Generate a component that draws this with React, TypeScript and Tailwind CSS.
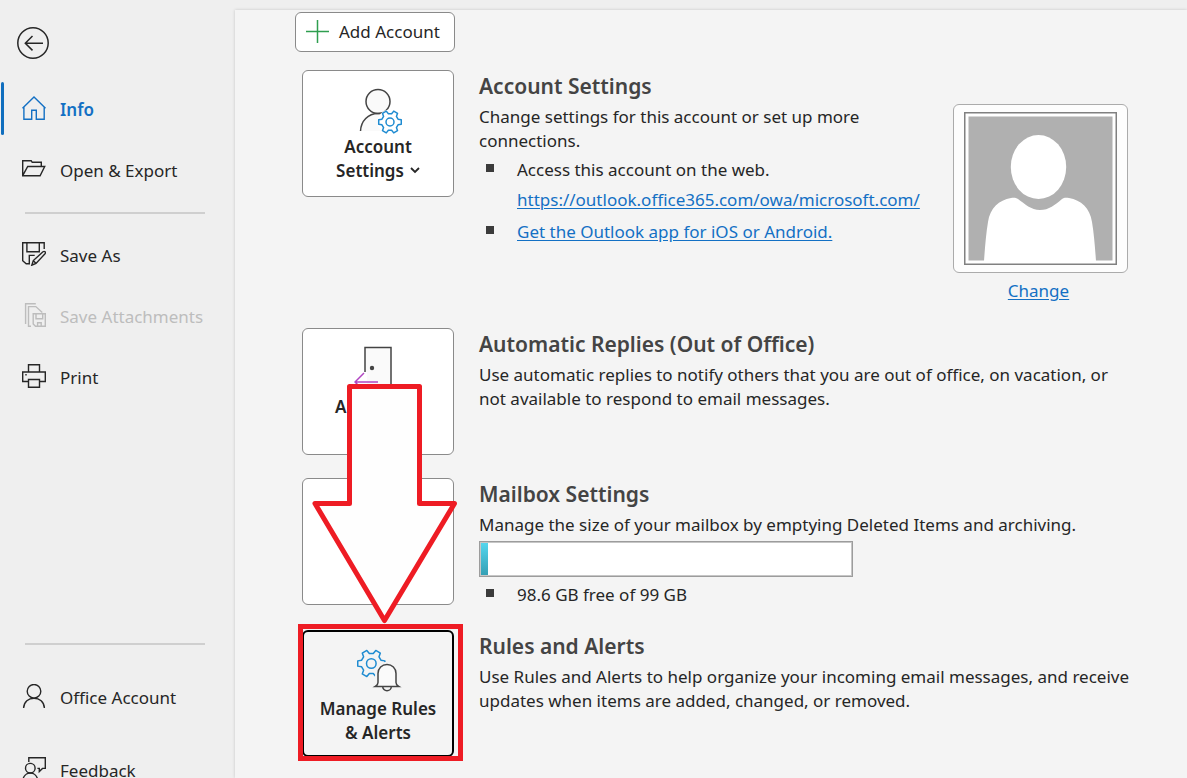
import React from "react";

type IconProps = { children: React.ReactNode };

function NavIcon({ children }: IconProps) {
    return (
        <svg
            viewBox="0 0 24 24"
            className="h-6 w-6 shrink-0"
            fill="none"
            stroke="currentColor"
            strokeWidth="1.4"
            aria-hidden="true"
        >
            {children}
        </svg>
    );
}

function TileIcon({ children }: IconProps) {
    return (
        <svg viewBox="0 0 48 47" className="h-[47px] w-12" fill="none" strokeWidth="1.5" aria-hidden="true">
            {children}
        </svg>
    );
}

// six-toothed cog outline around (cx, cy)
function gearPath(cx: number, cy: number, r: number) {
    const steps: [number, number][] = [];
    for (let k = 0; k < 6; k++) {
        const a = k * 60;
        steps.push([a - 11, r], [a + 11, r], [a + 19, r * 0.74], [a + 41, r * 0.74]);
    }
    const points = steps.map(([deg, rad]) => {
        const t = (deg * Math.PI) / 180;
        return `${(cx + rad * Math.cos(t)).toFixed(2)} ${(cy + rad * Math.sin(t)).toFixed(2)}`;
    });
    return `M${points.join("L")}Z`;
}

type NavItemProps = {
    label: string;
    icon: React.ReactNode;
    active?: boolean;
    disabled?: boolean;
};

function NavItem({ label, icon, active, disabled }: NavItemProps) {
    const color = active ? "text-[#1370c4] font-semibold" : disabled ? "text-[#bdbdbd]" : "text-[#262626]";
    return (
        <button
            type="button"
            disabled={disabled}
            className={`flex h-[60px] w-full items-center text-left ${color}`}
        >
            <span className={`ml-px h-[53px] w-[3px] rounded-sm ${active ? "bg-[#106ebe]" : ""}`} />
            <span className="ml-[18px] flex items-center gap-[14px]">
                <NavIcon>{icon}</NavIcon>
                <span className="pt-1">{label}</span>
            </span>
        </button>
    );
}

type TileProps = {
    icon?: React.ReactNode;
    children?: React.ReactNode;
    labelledBy?: string;
    selected?: boolean;
    compact?: boolean;
};

function Tile({ icon, children, labelledBy, selected, compact }: TileProps) {
    return (
        <button
            type="button"
            aria-labelledby={labelledBy}
            className={`flex h-[127px] w-[152px] shrink-0 flex-col items-center rounded-md font-semibold text-[#262626] ${
                compact ? "" : "gap-[2px]"
            } ${selected ? "border-2 border-black bg-[#f4f4f4] pt-4" : "border border-[#8a8a8a] bg-white pt-[17px]"}`}
        >
            {icon && <TileIcon>{icon}</TileIcon>}
            <span>{children}</span>
        </button>
    );
}

type SectionProps = {
    id: string;
    title: string;
    tile: React.ReactNode;
    children: React.ReactNode;
    aside?: React.ReactNode;
};

function Section({ id, title, tile, children, aside }: SectionProps) {
    return (
        <section className="flex items-start">
            {tile}
            <div className="ml-[25px] min-w-0 flex-1">
                <h2 id={id} className="text-[21px] leading-8 font-semibold text-[#444444]">
                    {title}
                </h2>
                <div className="mt-[3px]">{children}</div>
            </div>
            {aside}
        </section>
    );
}

function Bullet({ children }: { children: React.ReactNode }) {
    return (
        <li className="flex">
            <span className="mt-[6px] ml-[7px] h-2 w-2 shrink-0 bg-[#3b3b3b]" />
            <div className="ml-[23px]">{children}</div>
        </li>
    );
}

function Sidebar() {
    return (
        <nav className="w-[235px] shrink-0 pt-[27px]">
            <button type="button" aria-label="Back" className="ml-[17px] block h-8 w-8">
                <svg viewBox="0 0 32 32" className="h-8 w-8" fill="none" stroke="#262626" strokeWidth="1.5">
                    <circle cx="16" cy="16" r="15.2" />
                    <path d="M26 16.2H8.5M15.5 9l-7.2 7.2 7.2 7.2" />
                </svg>
            </button>
            <div className="mt-[19px] flex flex-col gap-px">
                <NavItem
                    label="Info"
                    active
                    icon={<path d="M.5 12.2 12 1l11.5 11.2M1.9 11v12.2h7.8v-8.9h4.6v8.9h7.9V11" />}
                />
                <NavItem
                    label="Open & Export"
                    icon={<path d="M.7 18.7V3.7h8.5l1 1.6h9.1v4.2M.7 18.7l5-9.2h17l-4.6 9.2z" />}
                />
            </div>
            <hr className="mt-[13px] mr-[30px] ml-[25px] border-t-2 border-[#cfcfcf]" />
            <div className="mt-[10px] flex flex-col gap-px">
                <NavItem
                    label="Save As"
                    icon={
                        <>
                            <path d="M22.2 7V.7H.7v18l3.5 3h3.1v-8.3h5.4M4.9.7v9h12.4v-9" />
                            <path d="m9.8 23.2 1.5-4.6L21 9.8c1.6-1.2 3.2.6 2 2l-9 9.6zM11.3 18.6l2.7 2.8" />
                        </>
                    }
                />
                <NavItem
                    label="Save Attachments"
                    disabled
                    icon={
                        <>
                            <path d="M3.6 21V.8h10.2M9 23.2H6.5V3.6h7.3l6.5 6" />
                            <path d="M11.2 10.8h12.1v12.5H13.5l-2.3-2.3zM14 10.8v4.9h6.7v-4.9M15.6 23.3v-3.5h3.6v3.5" />
                        </>
                    }
                />
                <NavItem
                    label="Print"
                    icon={
                        <>
                            <path d="M6.5 8V.7h11V8M6.5 17.5H.7V8h22.6v9.5h-5.8M6.5 15.5h11v7.8h-11z" />
                            <path d="M3.3 10.8h1.4" />
                        </>
                    }
                />
            </div>
            <hr className="mt-[237px] mr-[30px] ml-[25px] border-t-2 border-[#cfcfcf]" />
            <div className="mt-[21px] flex flex-col gap-[13px]">
                <NavItem
                    label="Office Account"
                    icon={
                        <>
                            <circle cx="12" cy="7.3" r="6.8" />
                            <path d="M1.6 24c.4-6 4.8-9.8 10.4-9.8S22 18 22.4 24" />
                        </>
                    }
                />
                <NavItem
                    label="Feedback"
                    icon={
                        <>
                            <path d="M6.8 5V.8h16.5v10.6h-2.8l-3.2 3.2v-3.2h-1.9" />
                            <circle cx="8.3" cy="11.2" r="4.8" />
                            <path d="M.6 24c.6-4.8 3.8-8 7.7-8s7.1 3.2 7.7 8" />
                        </>
                    }
                />
            </div>
        </nav>
    );
}

function ProfilePhoto() {
    return (
        <div className="mr-2 ml-[23px] shrink-0 pt-[34px]">
            <div className="rounded-md border border-[#ababab] bg-[#fdfdfd] px-[10px] py-[7px]">
                <svg viewBox="0 0 153 153" className="h-[153px] w-[153px]" role="img" aria-label="Profile photo">
                    <rect x="0.75" y="0.75" width="151.5" height="151.5" fill="#fff" stroke="#808080" strokeWidth="1.5" />
                    <rect x="4.5" y="4.5" width="144" height="144" fill="#b0b0b0" />
                    <ellipse cx="74.5" cy="55" rx="27.7" ry="32" fill="#fff" />
                    <path
                        d="M20 149c1-14 2-27 4-39 2-14 11-22 23-24 3-.6 5-.3 7 1 7 5 13 11 22 11s15-5 22-11c2-1.5 4-1.5 7-1 12 2 21 10 23 24 2 12 3 25 4 39z"
                        fill="#fff"
                    />
                </svg>
            </div>
            <div className="mt-[6px] mr-1 mb-[2px] text-center">
                <a href="#change" className="text-[#1370c4] underline underline-offset-2">
                    Change
                </a>
            </div>
        </div>
    );
}

export default function App() {
    return (
        <div className="flex h-screen overflow-hidden bg-[#efefef] font-['Noto_Sans',sans-serif] text-[17px] leading-6 text-[#262626]">
            <Sidebar />
            <main className="relative mt-[10px] flex-1 bg-[#f4f4f4] pt-[2px] pr-[51px] pl-[67px] shadow-[0_0_3px_rgba(0,0,0,0.18)]">
                <button
                    type="button"
                    className="-ml-[7px] flex h-10 w-40 items-center gap-[10px] rounded-md border border-[#8a8a8a] bg-white pl-[9px]"
                >
                    <svg viewBox="0 0 24 24" className="h-6 w-6" stroke="#2f9e4f" strokeWidth="1.5" aria-hidden="true">
                        <path d="M12.5 0v23M1 11.5h23" />
                    </svg>
                    Add Account
                </button>

                <div className="mt-[18px] flex flex-col gap-[23px]">
                    <Section
                        id="account-settings"
                        title="Account Settings"
                        aside={<ProfilePhoto />}
                        tile={
                            <Tile
                                compact
                                icon={
                                    <>
                                        <path d="M6.5 43C7 33 14 25.5 24 25.5h8V43z" fill="#fafafa" />
                                        <circle cx="24" cy="13.5" r="12" fill="#fafafa" stroke="#444" />
                                        <path d="M6.5 43C7 33 14 25.5 24 25.5h4" stroke="#444" />
                                        <circle cx="36" cy="34" r="12.5" fill="#fff" />
                                        <path d={gearPath(36, 34, 11.5)} stroke="#1e8bd1" strokeLinejoin="round" />
                                        <circle cx="36" cy="34" r="4" stroke="#1e8bd1" />
                                    </>
                                }
                            >
                                Account
                                <br />
                                Settings
                                <svg
                                    viewBox="0 0 10 10"
                                    className="ml-[6px] inline h-[10px] w-[10px]"
                                    fill="none"
                                    stroke="#262626"
                                    strokeWidth="1.8"
                                    aria-hidden="true"
                                >
                                    <path d="m1 1 4 4 4-4" />
                                </svg>
                            </Tile>
                        }
                    >
                        <p>Change settings for this account or set up more connections.</p>
                        <ul className="mt-[5px] flex flex-col gap-2">
                            <Bullet>
                                <p>Access this account on the web.</p>
                                <a
                                    href="https://outlook.office365.com/owa/microsoft.com/"
                                    className="mt-[6px] block text-[#1370c4] underline underline-offset-2"
                                >
                                    https://outlook.office365.com/owa/microsoft.com/
                                </a>
                            </Bullet>
                            <Bullet>
                                <a href="#mobile" className="text-[#1370c4] underline underline-offset-2">
                                    Get the Outlook app for iOS or Android.
                                </a>
                            </Bullet>
                        </ul>
                    </Section>

                    <Section
                        id="automatic-replies"
                        title="Automatic Replies (Out of Office)"
                        tile={
                            <Tile
                                icon={
                                    <>
                                        <path d="M11 1.5h26V45H11z" fill="#fafafa" stroke="#444" />
                                        <circle cx="18" cy="22" r="2.2" fill="#444" />
                                        <path d="M9 26h4v13H9z" fill="#fff" />
                                        <path d="M24 36H1M10 27l-9 9 9 9" stroke="#b146c2" />
                                    </>
                                }
                            >
                                Automatic
                                <br />
                                Replies
                            </Tile>
                        }
                    >
                        <p>
                            Use automatic replies to notify others that you are out of office, on vacation, or not
                            available to respond to email messages.
                        </p>
                    </Section>

                    <Section id="mailbox-settings" title="Mailbox Settings" tile={<Tile labelledBy="mailbox-settings" />}>
                        <p>Manage the size of your mailbox by emptying Deleted Items and archiving.</p>
                        <div className="mt-1 h-9 w-[374px] border border-[#9c9c9c] bg-white p-px shadow-[inset_0_0_0_1px_#c6c6c6]">
                            <div className="h-full w-[7px] bg-linear-to-b from-[#55d6ee] to-[#35a0b5]" />
                        </div>
                        <ul className="mt-[6px]">
                            <Bullet>98.6 GB free of 99 GB</Bullet>
                        </ul>
                    </Section>

                    <Section
                        id="rules-and-alerts"
                        title="Rules and Alerts"
                        tile={
                            <Tile
                                selected
                                icon={
                                    <>
                                        <path d={gearPath(17.3, 15.5, 13.8)} stroke="#1e8bd1" strokeLinejoin="round" />
                                        <circle cx="17.3" cy="15.5" r="4.8" stroke="#1e8bd1" />
                                        <path d="M20.5 41V31l2-13 8-4h15v27z" fill="#f4f4f4" />
                                        <path d="M28.7 38.5a4.3 4.3 0 0 0 8.6 0" stroke="#444" />
                                        <path
                                            d="M21.3 38.5c1.8-1 2.7-2 2.7-4v-9c0-5.5 4-9 9-9s9 3.5 9 9v9c0 2 .9 3 2.7 4z"
                                            fill="#fafafa"
                                            stroke="#444"
                                        />
                                    </>
                                }
                            >
                                Manage Rules
                                <br />
                                &amp; Alerts
                            </Tile>
                        }
                    >
                        <p>
                            Use Rules and Alerts to help organize your incoming email messages, and receive updates when
                            items are added, changed, or removed.
                        </p>
                    </Section>
                </div>

                {/* callout arrow and frame */}
                <svg
                    viewBox="0 0 146 240"
                    className="pointer-events-none absolute top-[374px] left-[77px] h-[240px] w-[146px]"
                    aria-hidden="true"
                >
                    <path
                        d="M37.5 2.5h70v117h35l-70 117L3 119.5h34.5z"
                        fill="#fefefe"
                        stroke="#ee1c24"
                        strokeWidth="5"
                        strokeLinejoin="round"
                    />
                </svg>
                <div className="pointer-events-none absolute top-[614px] left-[63px] h-[137px] w-[165px] border-5 border-[#ee1c24]" />
            </main>
        </div>
    );
}
